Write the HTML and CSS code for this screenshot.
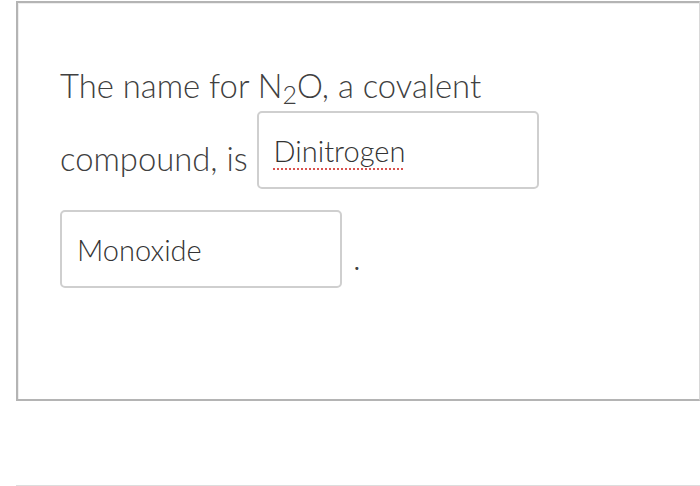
FILE: index.html
```html
<!DOCTYPE html>
<html>
<head>
<meta charset="utf-8">
<link rel="stylesheet" href="styles.css">
</head>
<body>
<div class="page">
  <div class="frame">
    <p class="question">The name for N<sub class="sub">2</sub>O, a covalent compound, is <span class="blank"><span class="misspelled">Dinitrogen</span></span> <span class="blank">Monoxide</span>.</p>
  </div>
  <div class="next"></div>
</div>
</body>
</html>
```
FILE: styles.css
```css
html, body {
  margin: 0;
  padding: 0;
  background: #ffffff;
}
.page {
  padding: 1px 0 0 16px;
  width: 684px;
}
.frame {
  border: 2px solid #b4b4b4;
  border-right: 1px solid #d8d8d8;
  box-shadow: inset 1px 1px 0 #eeeeee;
  height: 400px;
  box-sizing: border-box;
  padding: 62px 0 0 42px;
}
.question {
  margin: 0;
  width: 560px;
  font-family: Lato, "Open Sans", sans-serif;
  font-weight: 300;
  font-size: 32.8px;
  line-height: 42px;
  color: #404040;
}
.sub {
  font-size: 25px;
  vertical-align: -6px;
  line-height: 0;
}
.blank {
  display: inline-block;
  box-sizing: border-box;
  width: 282px;
  height: 78px;
  border: 2px solid #cfcfcf;
  border-radius: 5px;
  padding: 0 0 0 15px;
  font-size: 29px;
  line-height: 76px;
  color: #333333;
  vertical-align: 9px;
  margin: 4px 11px 17px 0;
}
.misspelled {
  text-decoration: underline dotted #d9534f;
  text-decoration-thickness: 2px;
  text-underline-offset: 6px;
}
.next {
  margin-top: 84px;
  border-top: 1px solid #dddddd;
}
```
